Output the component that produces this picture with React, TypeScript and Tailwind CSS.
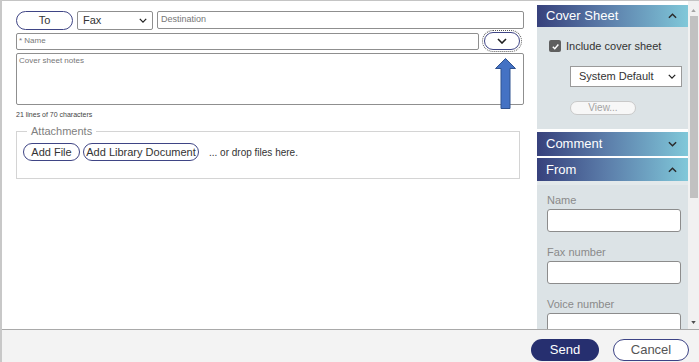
import React from 'react'

const font = "font-['Liberation_Sans',Arial,sans-serif]"

function Chevron({ up = false, className = '' }: { up?: boolean; className?: string }) {
  return (
    <svg viewBox="0 0 10 6" className={className} fill="none" stroke="currentColor" strokeWidth="1.6">
      {up ? <path d="M1 5 L5 1 L9 5" /> : <path d="M1 1 L5 5 L9 1" />}
    </svg>
  )
}

function PanelHeader({ title, up, className = '' }: { title: string; up: boolean; className?: string }) {
  return (
    <div
      className={`flex items-center justify-between pl-[9px] pr-[11px] bg-linear-to-r from-[#37417c] via-[#5b7ca9] via-45% to-[#80c8d9] ${className}`}
    >
      <span className="text-[13px] text-white">{title}</span>
      <Chevron up={up} className="w-[9px] h-[6px] text-[#2a2a2a]" />
    </div>
  )
}

function FromField({ label, first = false }: { label: string; first?: boolean }) {
  return (
    <div className={first ? 'pt-[9px]' : 'pt-[14px]'}>
      <div className="text-[11px] leading-[13px] text-[#8a8a8a] pl-[10px]">{label}</div>
      <div className="mt-[2px] ml-[10px] w-[134px] h-[23px] bg-white border border-[#8c8c8c] rounded-[3px]" />
    </div>
  )
}

export default function App() {
  return (
    <div
      className={`relative w-[699px] h-[362px] flex flex-col bg-white border-l-2 border-[#c8c8c8] overflow-hidden ${font}`}
    >
      <div className="flex h-[329px] border-t border-[#c4c4c4]">
        {/* Compose area */}
        <main className="w-[535px] pl-[14px] pr-[13px] pt-[10px]">
          <div className="flex h-[19px] gap-[4px]">
            <button className="w-[57px] h-[19px] rounded-full border border-[#3f4585] text-[11px] text-[#333]">
              To
            </button>
            <div className="w-[76px] h-[19px] flex items-center justify-between pl-[5px] pr-[5px] border border-[#8f8f8f] rounded-[2px] text-[11px] text-[#333]">
              <span>Fax</span>
              <Chevron className="w-[8px] h-[5px] text-[#222]" />
            </div>
            <div className="flex-1 h-[18px] flex items-center pl-[3px] border border-[#8f8f8f] rounded-[2px] text-[9px] text-[#777]">
              Destination
            </div>
          </div>

          <div className="flex items-center h-[20px] mt-[1px] gap-[5px] pr-[4px]">
            <div className="flex-1 h-[17px] flex items-center pl-[2px] border border-[#8f8f8f] rounded-[2px] text-[8px] text-[#777]">
              * Name
            </div>
            <button className="w-[36px] h-[18px] flex items-center justify-center rounded-full border border-[#3f4585] outline-1 outline-dotted outline-offset-1 outline-[#555]">
              <Chevron className="w-[10px] h-[6px] text-[#1f1f1f]" />
            </button>
          </div>

          <div className="mt-[2px] h-[52px] border border-[#8f8f8f] rounded-[2px] pl-[2px] pt-[1px] text-[8px] text-[#777]">
            Cover sheet notes
          </div>

          <div className="mt-[5px] text-[7px] leading-[9px] text-[#444]">21 lines of 70 characters</div>

          <fieldset className="mt-[6px] w-[504px] border border-[#d4d4d4] pl-[6px] pb-[17px]">
            <legend className="ml-[4px] px-[4px] text-[11px] leading-[13px] text-[#808080]">Attachments</legend>
            <div className="flex items-center mt-[5px]">
              <button className="w-[57px] h-[18px] rounded-full border border-[#3f4585] text-[11px] text-[#333]">
                Add File
              </button>
              <button className="ml-[3px] w-[116px] h-[18px] rounded-full border border-[#3f4585] text-[11px] text-[#333]">
                Add Library Document
              </button>
              <span className="ml-[10px] text-[10px] text-[#333]">... or drop files here.</span>
            </div>
          </fieldset>
        </main>

        {/* Side panel */}
        <aside className="w-[151px] pt-[4px] overflow-hidden">
          <PanelHeader title="Cover Sheet" up className="h-[22px]" />
          <div className="bg-[#dce3e6] h-[102px] pt-[11px]">
            <div className="flex items-center pl-[12px] gap-[5px]">
              <span className="w-[12px] h-[12px] rounded-[2px] bg-[#5f5f5f] flex items-center justify-center">
                <svg viewBox="0 0 10 10" className="w-[9px] h-[9px]" fill="none" stroke="white" strokeWidth="1.6">
                  <path d="M2 5.2 L4.2 7.4 L8.2 2.8" />
                </svg>
              </span>
              <span className="text-[11px] text-[#333]">Include cover sheet</span>
            </div>
            <div className="mt-[11px] ml-[33px] w-[112px] h-[21px] bg-white border border-[#9a9a9a] flex items-center justify-between pl-[8px] pr-[5px] text-[11px] text-[#333]">
              <span>System Default</span>
              <Chevron className="w-[8px] h-[5px] text-[#222]" />
            </div>
            <div className="mt-[14px] ml-[33px] w-[66px] h-[14px] rounded-full border border-[#c9c9c9] bg-[#f7f7f7] flex items-center justify-center text-[10px] text-[#a3a3a3]">
              View...
            </div>
          </div>
          <PanelHeader title="Comment" up={false} className="mt-[3px] h-[24px]" />
          <PanelHeader title="From" up className="mt-[2px] h-[23px]" />
          <div className="bg-[#dce3e6] border-t-[4px] border-[#e3e9eb] h-[200px]">
            <FromField label="Name" first />
            <FromField label="Fax number" />
            <FromField label="Voice number" />
          </div>
        </aside>

        {/* Scrollbar */}
        <div className="w-[11px] bg-[#f1f1f1] flex flex-col items-center">
          <svg viewBox="0 0 6 4" className="mt-[8px] w-[5px] h-[3px]" fill="#a3a3a3">
            <path d="M0 4 L3 0 L6 4 Z" />
          </svg>
          <div className="mt-[4px] ml-[1px] w-[8px] h-[182px] bg-[#c1c1c1]" />
          <div className="flex-1" />
          <svg viewBox="0 0 6 4" className="mb-[5px] w-[5px] h-[3px]" fill="#505050">
            <path d="M0 0 L6 0 L3 4 Z" />
          </svg>
        </div>
      </div>

      {/* Footer */}
      <footer className="h-[33px] border-t border-[#a9a9a9] bg-[#f3f3f3] flex justify-end pt-[9px] pr-[10px] gap-[14px]">
        <button className="w-[68px] h-[22px] rounded-full bg-[#262f6f] text-white text-[13px]">Send</button>
        <button className="w-[76px] h-[22px] rounded-full bg-white border border-[#3c4385] text-[#555] text-[13px]">
          Cancel
        </button>
      </footer>

      {/* Annotation arrow */}
      <svg
        viewBox="0 0 21 51"
        className="absolute left-[493px] top-[58px] w-[21px] h-[51px]"
      >
        <path
          d="M10.5 0.5 L20.5 10.5 L15 10.5 L15 50.5 L6 50.5 L6 10.5 L0.5 10.5 Z"
          fill="#4472c4"
          stroke="#2f528f"
          strokeWidth="1"
        />
      </svg>
    </div>
  )
}
